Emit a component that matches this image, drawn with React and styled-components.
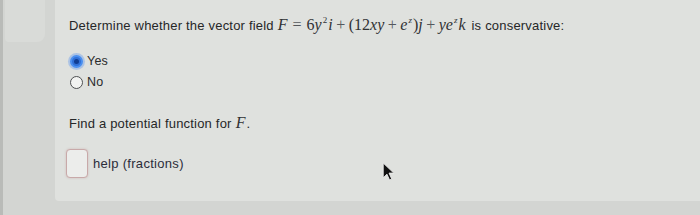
import React from 'react';
import styled, { createGlobalStyle } from 'styled-components';

const Global = createGlobalStyle`
  html, body { margin: 0; padding: 0; }
  body {
    width: 700px;
    height: 215px;
    overflow: hidden;
    background: #d3d5d2;
    font-family: "Liberation Sans", Arial, sans-serif;
  }
`;

const Screen = styled.div`
  display: flex;
  width: 700px;
  height: 215px;
  background: #d3d5d2;
  border-left: 3px solid #b9bbb8;
  box-sizing: border-box;
`;

const Gutter = styled.div`
  width: 52px;
  flex-shrink: 0;
  display: flex;
  flex-direction: column;
  padding-left: 2px;
  box-sizing: border-box;
`;

const GhostTab = styled.div`
  width: 40px;
  height: 42px;
  background: #d9dbd8;
  border-bottom-right-radius: 8px;
  border-bottom-left-radius: 4px;
`;

const Panel = styled.div`
  flex: 1;
  height: 201px;
  background: #dfe1de;
  border-bottom-left-radius: 4px;
  padding: 17px 0 0 14px;
  box-sizing: border-box;
  color: #262728;
  font-size: 13px;
  letter-spacing: 0.2px;
  position: relative;
`;

const Prompt = styled.div`
  line-height: 16px;
  white-space: nowrap;
`;

const Math = styled.span`
  font-family: "Liberation Serif", "Times New Roman", serif;
  font-size: 16px;
  letter-spacing: 0;
  margin: 0 ${p => p.$after ?? 6}px 0 4px;
  color: #303134;
`;

const V = styled.i`
  font-style: italic;
`;

const Op = styled.span`
  margin: 0 ${p => p.$gap || 3.5}px;
  color: #55585c;
`;

const Sup = styled.sup`
  font-size: 9px;
  vertical-align: 7px;
  line-height: 0;
  margin: 0 1px;
`;

const Choices = styled.div`
  display: flex;
  flex-direction: column;
  gap: 7px;
  margin-top: 20px;
  margin-left: 1px;
`;

const Choice = styled.label`
  display: flex;
  align-items: center;
  gap: 4px;
  font-size: 12.5px;
  line-height: 14px;
  color: #2a2b2c;
`;

const Radio = styled.span`
  width: 13px;
  height: 13px;
  border-radius: 50%;
  box-sizing: border-box;
  display: flex;
  align-items: center;
  justify-content: center;
  background: ${p => (p.$on ? '#2f6fd6' : '#f2f3f1')};
  border: ${p => (p.$on ? '2px solid #4a8ff0' : '1.5px solid #4e5052')};
  box-shadow: ${p => (p.$on ? '0 0 0 2px rgba(110,160,235,0.45)' : 'none')};
  &::after {
    content: '';
    display: ${p => (p.$on ? 'block' : 'none')};
    width: 5px;
    height: 5px;
    border-radius: 50%;
    background: #0f3c93;
  }
`;

const Question = styled.div`
  margin-top: 26px;
  line-height: 16px;
`;

const AnswerRow = styled.div`
  display: flex;
  align-items: center;
  gap: 5px;
  margin-top: 17px;
  margin-left: -3px;
`;

const AnswerBox = styled.span`
  width: 22px;
  height: 29px;
  border-radius: 4px;
  border: 1.5px solid #c8a9a9;
  background: #ecedeb;
  box-sizing: border-box;
  box-shadow: 0 0 2px rgba(190, 140, 140, 0.5);
`;

const Help = styled.span`
  font-size: 13px;
  letter-spacing: 0.3px;
  color: #2b2d3a;
`;

const Cursor = styled.svg`
  position: absolute;
  left: 327px;
  top: 162px;
`;

export default function App() {
  return (
    <>
      <Global />
      <Screen>
        <Gutter>
          <GhostTab />
        </Gutter>
        <Panel>
          <Prompt>
            Determine whether the vector field
            <Math>
              <V>F</V>
              <Op $gap={5}>=</Op>6<V>y</V>
              <Sup>2</Sup>
              <V>i</V>
              <Op>+</Op>(12<V>xy</V>
              <Op>+</Op>
              <V>e</V>
              <Sup>
                <V>z</V>
              </Sup>
              )<V>j</V>
              <Op>+</Op>
              <V>ye</V>
              <Sup>
                <V>z</V>
              </Sup>
              <V>k</V>
            </Math>
            is conservative:
          </Prompt>
          <Choices>
            <Choice>
              <Radio $on />
              Yes
            </Choice>
            <Choice>
              <Radio />
              No
            </Choice>
          </Choices>
          <Question>
            Find a potential function for
            <Math $after={1}>
              <V>F</V>
            </Math>
            .
          </Question>
          <AnswerRow>
            <AnswerBox />
            <Help>help (fractions)</Help>
          </AnswerRow>
          <Cursor width="13" height="19" viewBox="0 0 12 18">
            <path d="M1 1 L1 15 L4.5 11.5 L7 17 L9 16 L6.5 10.5 L11 10.5 Z" fill="#111" stroke="#eee" strokeWidth="0.8" />
          </Cursor>
        </Panel>
      </Screen>
    </>
  );
}
